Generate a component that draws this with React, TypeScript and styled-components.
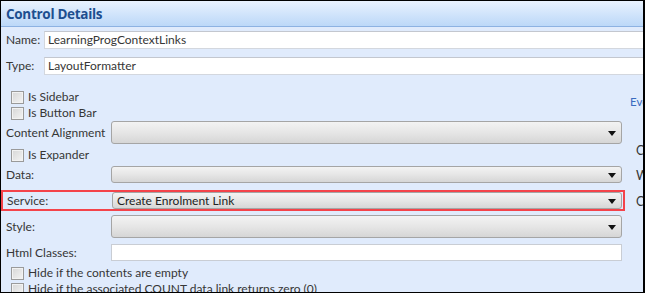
import React from "react";
import styled, { createGlobalStyle } from "styled-components";

const GlobalStyle = createGlobalStyle`
  html, body {
    margin: 0;
    padding: 0;
    background: #ffffff;
  }
  * {
    box-sizing: border-box;
  }
`;

const sideNotes = [
  { text: "Eve", top: 19, link: true },
  { text: "C", top: 33 },
  { text: "W", top: 9 },
  { text: "C", top: 10 },
];

const App: React.FC = () => {
  return (
    <>
      <GlobalStyle />
      <Frame>
        <Header>
          <Title>Control Details</Title>
        </Header>
        <TopFields>
          <ShortRow $top={4}>
            <Label>Name:</Label>
            <TextBox>LearningProgContextLinks</TextBox>
          </ShortRow>
          <ShortRow $top={8}>
            <Label>Type:</Label>
            <TextBox>LayoutFormatter</TextBox>
          </ShortRow>
        </TopFields>
        <Lower>
          <FormColumn>
            <CheckRow $top={14}>
              <CheckBox />
              <CheckLabel>Is Sidebar</CheckLabel>
            </CheckRow>
            <CheckRow>
              <CheckBox />
              <CheckLabel>Is Button Bar</CheckLabel>
            </CheckRow>
            <FieldRow>
              <Label>Content Alignment</Label>
              <Dropdown $tall />
            </FieldRow>
            <CheckRow $top={3}>
              <CheckBox />
              <CheckLabel>Is Expander</CheckLabel>
            </CheckRow>
            <FieldRow $top={3}>
              <Label>Data:</Label>
              <Dropdown />
            </FieldRow>
            <Highlight>
              <FieldRow>
                <Label>Service:</Label>
                <Dropdown>Create Enrolment Link</Dropdown>
              </FieldRow>
            </Highlight>
            <FieldRow $top={4}>
              <Label>Style:</Label>
              <Dropdown $tall />
            </FieldRow>
            <FieldRow $top={6}>
              <Label>Html Classes:</Label>
              <PlainInput />
            </FieldRow>
            <CheckRow $top={4}>
              <CheckBox />
              <CheckLabel>Hide if the contents are empty</CheckLabel>
            </CheckRow>
            <CheckRow>
              <CheckBox />
              <CheckLabel>
                Hide if the associated COUNT data link returns zero (0)
              </CheckLabel>
            </CheckRow>
          </FormColumn>
          <SidePanel>
            {sideNotes.map((n, i) => (
              <SideNote key={i} $top={n.top} $link={n.link}>
                {n.text}
              </SideNote>
            ))}
          </SidePanel>
        </Lower>
      </Frame>
    </>
  );
};

const Frame = styled.div`
  width: 645px;
  height: 293px;
  overflow: hidden;
  border-style: solid;
  border-color: #000;
  border-width: 1px 2px 1px 1px;
  background: #e0ebfc;
  font-family: Lato, "Open Sans", "Noto Sans", sans-serif;
  font-size: 12px;
  color: #363636;
  display: flex;
  flex-direction: column;
`;

const Header = styled.div`
  height: 26px;
  flex: none;
  display: flex;
  align-items: center;
  padding-left: 5px;
  background: linear-gradient(#e9f2fe, #d2e5fb 50%, #bcd8f8);
  border-bottom: 1px solid #8db2e2;
`;

const Title = styled.div`
  font-family: "Open Sans", Lato, sans-serif;
  font-weight: 700;
  font-size: 13.5px;
  color: #1d4f8f;
  letter-spacing: -0.3px;
`;

const TopFields = styled.div`
  display: flex;
  flex-direction: column;
  flex: none;
`;

const Lower = styled.div`
  display: flex;
  flex: 1;
  min-height: 0;
`;

const FormColumn = styled.div`
  width: 624px;
  flex: none;
  display: flex;
  flex-direction: column;
`;

const SidePanel = styled.div`
  flex: 1;
  overflow: hidden;
  display: flex;
  flex-direction: column;
  padding-left: 5px;
`;

const SideNote = styled.div<{ $top: number; $link?: boolean }>`
  margin-top: ${(p) => p.$top}px;
  margin-left: ${(p) => (p.$link ? 0 : 6)}px;
  height: 16px;
  line-height: 16px;
  white-space: nowrap;
  color: ${(p) => (p.$link ? "#3a6cc0" : "#363636")};
  font-size: ${(p) => (p.$link ? 11.5 : 12.5)}px;
`;

const ShortRow = styled.div<{ $top?: number }>`
  display: grid;
  grid-template-columns: 38px 1fr;
  align-items: center;
  margin-top: ${(p) => p.$top ?? 0}px;
  padding-left: 5px;
  height: 18px;
`;

const FieldRow = styled.div<{ $top?: number }>`
  display: grid;
  grid-template-columns: 105px 511px;
  align-items: center;
  margin-top: ${(p) => p.$top ?? 0}px;
  padding-left: 5px;
`;

const Label = styled.span`
  white-space: nowrap;
  line-height: 16px;
`;

const TextBox = styled.div`
  height: 18px;
  width: 620px;
  background: #fff;
  border-top: 1px solid #c3c7cf;
  border-bottom: 1px solid #d3d7de;
  border-left: 1px solid #d3d7de;
  padding-left: 3px;
  line-height: 16px;
  white-space: nowrap;
`;

const Dropdown = styled.div<{ $tall?: boolean }>`
  position: relative;
  height: ${(p) => (p.$tall ? 23 : 17)}px;
  line-height: ${(p) => (p.$tall ? 21 : 15)}px;
  padding-left: 4px;
  border: 1px solid #a5a5a5;
  border-radius: 3px;
  background: linear-gradient(#f3f3f3, #e6e6e6 50%, #d6d6d6);
  white-space: nowrap;
  color: #222;

  &::after {
    content: "";
    position: absolute;
    right: 5px;
    top: 50%;
    margin-top: -2px;
    border-left: 4px solid transparent;
    border-right: 4px solid transparent;
    border-top: 5px solid #111;
  }
`;

const PlainInput = styled.div`
  height: 17px;
  background: #fff;
  border: 1px solid #c9cdd4;
`;

const Highlight = styled.div`
  margin-top: 7px;
  width: 624px;
  height: 21px;
  border: 2px solid #f4434a;
  display: flex;
  align-items: center;

  & > ${FieldRow} {
    padding-left: 4px;
    grid-template-columns: 105px 510px;
  }
`;

const CheckRow = styled.div<{ $top?: number }>`
  display: flex;
  align-items: center;
  gap: 4px;
  height: 16px;
  margin-top: ${(p) => p.$top ?? 0}px;
  padding-left: 10px;
`;

const CheckBox = styled.span`
  width: 13px;
  height: 13px;
  flex: none;
  border: 1px solid #9a9a9a;
  background: linear-gradient(135deg, #d6d6d6, #f4f4f4);
  box-shadow: inset 0 0 0 1px #f2f2f2;
`;

const CheckLabel = styled.span`
  white-space: nowrap;
  line-height: 16px;
`;

export default App;
